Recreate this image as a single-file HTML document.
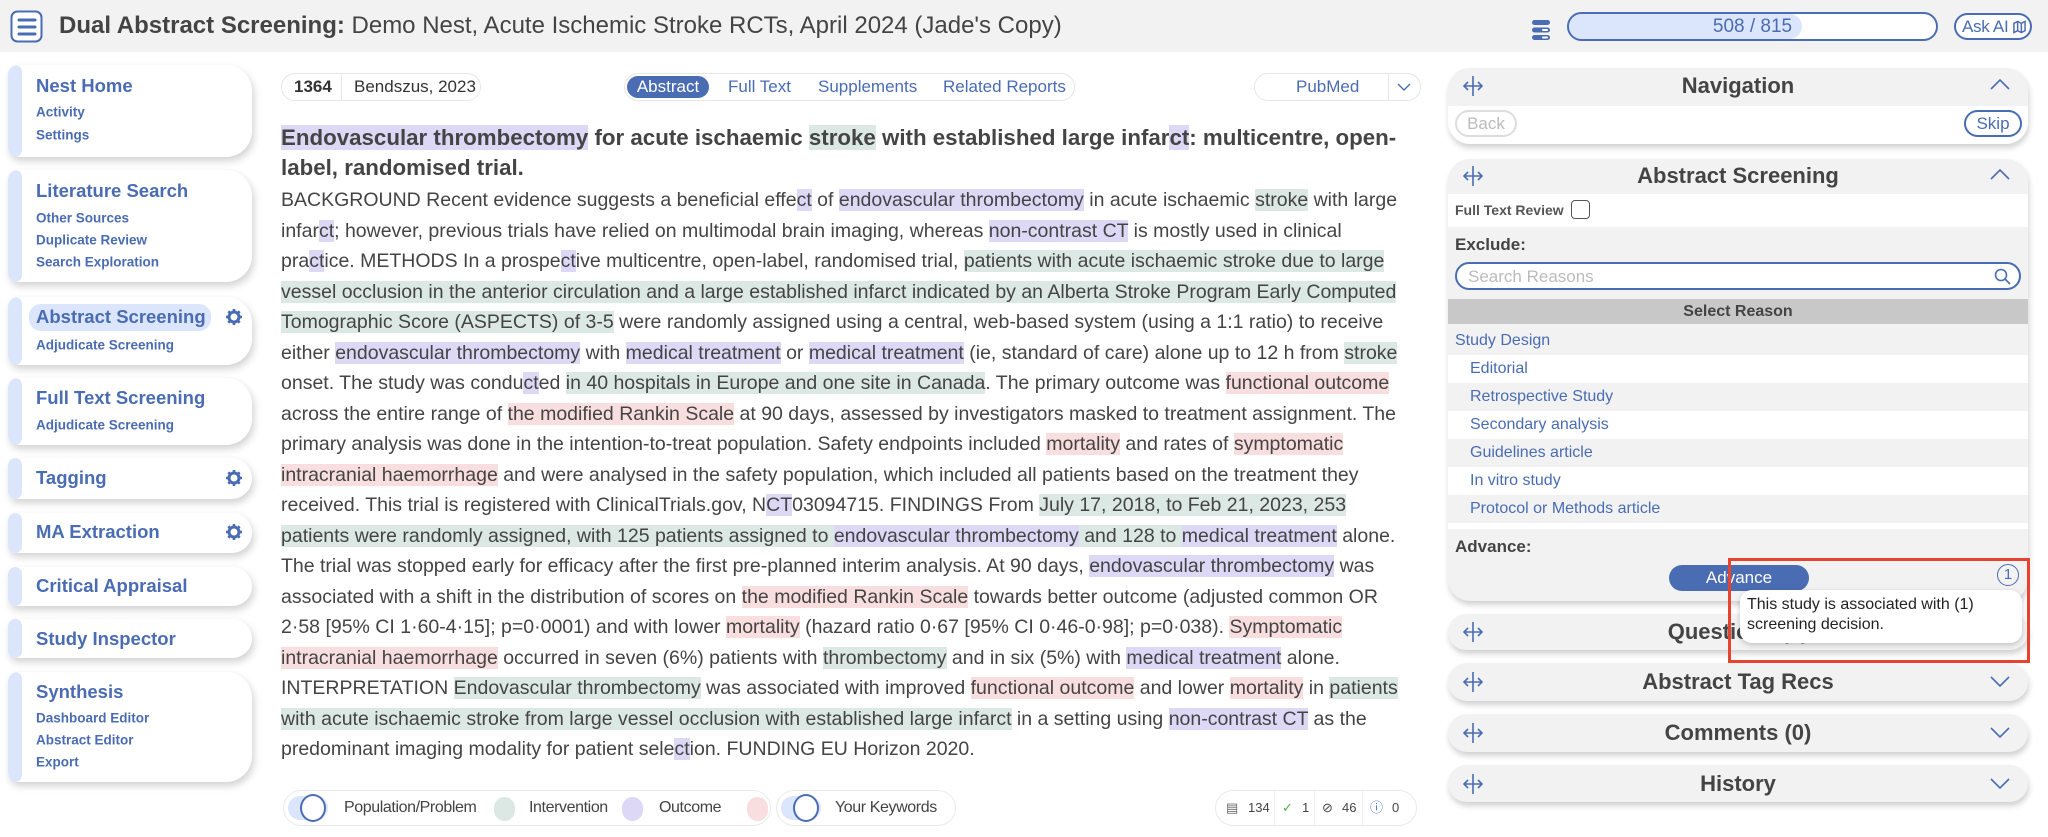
<!DOCTYPE html>
<html><head><meta charset="utf-8"><style>
*{box-sizing:border-box;margin:0;padding:0}
body{width:2048px;height:837px;overflow:hidden;background:#fff;font-family:"Liberation Sans",Arial,sans-serif;color:#444;position:relative}
.a{position:absolute}
.hdr{left:0;top:0;width:2048px;height:52px;background:#f2f2f2}
.card{position:absolute;left:8px;width:244px;background:#fff;border-radius:10px 26px 26px 10px;box-shadow:2px 4px 8px rgba(0,0,0,.18);overflow:hidden}
.card .strip{position:absolute;left:0;top:0;bottom:0;width:14px;background:#dbe5fb;border-radius:10px}
.nt{position:absolute;left:28px;font-weight:bold;font-size:18.5px;color:#4a6cb3;white-space:nowrap;transform:translateY(-50%)}
.ns{position:absolute;left:28px;font-weight:bold;font-size:13.5px;color:#4a6cb3;white-space:nowrap;transform:translateY(-50%)}
.gear{position:absolute;left:218px;width:16px;height:16px;transform:translateY(-50%)}
.ln{position:absolute;left:281px;font-size:19.5px;white-space:nowrap;color:#444;line-height:26px;transform:translateY(-50%)}
.g{background:#dce8e4}.p{background:#dcd8f6}.r{background:#f8dede}
.tl{position:absolute;left:281px;font-size:22.3px;font-weight:bold;white-space:nowrap;color:#444;line-height:28px;transform:translateY(-50%)}
.pc{position:absolute;left:1448px;width:580px;background:#f2f2f2;border-radius:22px;box-shadow:1px 4px 6px rgba(0,0,0,.18);overflow:hidden}
.ph{position:absolute;left:0;width:580px;text-align:center;font-weight:bold;font-size:22px;color:#444;transform:translateY(-50%)}
.mv{position:absolute;left:14px;width:22px;height:22px;transform:translateY(-50%)}
.chev{position:absolute;right:18px;width:20px;height:12px;transform:translateY(-50%)}
.row{position:absolute;left:0;width:580px;height:28px;line-height:28px;font-size:16px;color:#4a6cb3;padding-left:22px}
</style></head><body>
<div class="a hdr"></div>
<svg class="a" style="left:10px;top:10px" width="34" height="34" viewBox="0 0 34 34"><rect x="1.5" y="1.5" width="30" height="30" rx="6" fill="#fff" stroke="#4a6cb3" stroke-width="2"/><path d="M9 10h16M9 17h16M9 24h16" stroke="#4a6cb3" stroke-width="3" stroke-linecap="round"/></svg>
<div class="a" style="left:59px;top:12px;font-size:24px;color:#444;white-space:nowrap"><b>Dual Abstract Screening:</b> Demo Nest, Acute Ischemic Stroke RCTs, April 2024 (Jade's Copy)</div>
<svg class="a" style="left:1531px;top:18px" width="20" height="24" viewBox="0 0 20 24"><rect x="1" y="2" width="18" height="5" rx="2.5" fill="#4a6cb3"/><rect x="1" y="9.5" width="18" height="5" rx="2.5" fill="#4a6cb3"/><rect x="1" y="17" width="18" height="5" rx="2.5" fill="#4a6cb3"/><rect x="11" y="11" width="6" height="2" rx="1" fill="#fff"/><rect x="11" y="18.5" width="6" height="2" rx="1" fill="#fff"/></svg>
<div class="a" style="left:1567px;top:12px;width:371px;height:29px;border:2px solid #4a6cb3;border-radius:15px;background:#fff;overflow:hidden"><div style="width:233px;height:100%;background:#dbe5fb;border-radius:15px"></div><div class="a" style="left:0;top:0;width:100%;text-align:center;line-height:25px;font-size:19px;color:#4a6cb3">508 / 815</div></div>
<div class="a" style="left:1954px;top:13px;width:78px;height:27px;border:2px solid #4a6cb3;border-radius:14px;background:#fff;font-size:17px;color:#4a6cb3;line-height:23px;padding-left:6px;white-space:nowrap;letter-spacing:-0.3px">Ask AI<svg style="position:absolute;left:57px;top:5px" width="13" height="14" viewBox="0 0 14 14"><path d="M1 3l4-2 4 2 4-2v10l-4 2-4-2-4 2z M5 1v10 M9 3v10" fill="none" stroke="#4a6cb3" stroke-width="1.6"/></svg></div>

<!-- sidebar -->
<div class="card" style="top:65px;height:92px"><div class="strip"></div><div class="nt" style="top:21px">Nest Home</div><div class="ns" style="top:47px">Activity</div><div class="ns" style="top:70px">Settings</div></div>
<div class="card" style="top:170px;height:112px"><div class="strip"></div><div class="nt" style="top:21px">Literature Search</div><div class="ns" style="top:48px">Other Sources</div><div class="ns" style="top:70px">Duplicate Review</div><div class="ns" style="top:92px">Search Exploration</div></div>
<div class="card" style="top:297px;height:68px"><div class="strip"></div><div class="a" style="left:21px;top:7px;width:182px;height:27px;background:#dbe5fb;border-radius:12px"></div><div class="nt" style="top:20px">Abstract Screening</div><div class="ns" style="top:48px">Adjudicate Screening</div><svg class="gear" style="top:20px" viewBox="0 0 16 16"><circle cx="8" cy="8" r="5" fill="none" stroke="#4a6cb3" stroke-width="3"/><path d="M8 0v4M8 12v4M0 8h4M12 8h4M2.3 2.3l2.8 2.8M10.9 10.9l2.8 2.8M2.3 13.7l2.8-2.8M10.9 5.1l2.8-2.8" stroke="#4a6cb3" stroke-width="2.6"/></svg></div>
<div class="card" style="top:378px;height:67px"><div class="strip"></div><div class="nt" style="top:20px">Full Text Screening</div><div class="ns" style="top:47px">Adjudicate Screening</div></div>
<div class="card" style="top:458px;height:41px"><div class="strip"></div><div class="nt" style="top:20px">Tagging</div><svg class="gear" style="top:20px" viewBox="0 0 16 16"><circle cx="8" cy="8" r="5" fill="none" stroke="#4a6cb3" stroke-width="3"/><path d="M8 0v4M8 12v4M0 8h4M12 8h4M2.3 2.3l2.8 2.8M10.9 10.9l2.8 2.8M2.3 13.7l2.8-2.8M10.9 5.1l2.8-2.8" stroke="#4a6cb3" stroke-width="2.6"/></svg></div>
<div class="card" style="top:513px;height:40px"><div class="strip"></div><div class="nt" style="top:19px">MA Extraction</div><svg class="gear" style="top:19px" viewBox="0 0 16 16"><circle cx="8" cy="8" r="5" fill="none" stroke="#4a6cb3" stroke-width="3"/><path d="M8 0v4M8 12v4M0 8h4M12 8h4M2.3 2.3l2.8 2.8M10.9 10.9l2.8 2.8M2.3 13.7l2.8-2.8M10.9 5.1l2.8-2.8" stroke="#4a6cb3" stroke-width="2.6"/></svg></div>
<div class="card" style="top:567px;height:39px"><div class="strip"></div><div class="nt" style="top:19px">Critical Appraisal</div></div>
<div class="card" style="top:619px;height:39px"><div class="strip"></div><div class="nt" style="top:20px">Study Inspector</div></div>
<div class="card" style="top:672px;height:110px"><div class="strip"></div><div class="nt" style="top:20px">Synthesis</div><div class="ns" style="top:46px">Dashboard Editor</div><div class="ns" style="top:68px">Abstract Editor</div><div class="ns" style="top:90px">Export</div></div>

<!-- main top -->
<div class="a" style="left:281px;top:73px;width:200px;height:28px;border:1px solid #e6e6e6;border-radius:14px;font-size:17px;line-height:26px;color:#333"><b style="position:absolute;left:12px">1364</b><div class="a" style="left:59px;top:0;width:1px;height:26px;background:#e6e6e6"></div><span style="position:absolute;left:72px">Bendszus, 2023</span></div>
<div class="a" style="left:624px;top:73px;width:451px;height:28px;border:1px solid #e6e6e6;border-radius:14px;font-size:17px;line-height:26px;color:#4a6cb3"><div class="a" style="left:2px;top:2px;width:82px;height:22px;background:#4a6cb3;border-radius:11px;color:#fff;text-align:center;line-height:22px">Abstract</div><span class="a" style="left:103px">Full Text</span><span class="a" style="left:193px">Supplements</span><span class="a" style="left:318px">Related Reports</span></div>
<div class="a" style="left:1254px;top:73px;width:167px;height:28px;border:1px solid #e6e6e6;border-radius:14px;font-size:17px;line-height:26px;color:#4a6cb3"><span class="a" style="left:41px">PubMed</span><div class="a" style="left:133px;top:0;width:1px;height:26px;background:#e6e6e6"></div><svg class="a" style="left:142px;top:9px" width="14" height="9" viewBox="0 0 14 9"><path d="M1 1l6 6 6-6" fill="none" stroke="#4a6cb3" stroke-width="1.4"/></svg></div>

<div class="tl" style="top:138px"><span class="p">Endovascular thrombectomy</span> for acute ischaemic <span class="g">stroke</span> with established large infar<span class="p">ct</span>: multicentre, open-</div>
<div class="tl" style="top:168px">label, randomised trial.</div>

<div class="ln" style="top:200px">BACKGROUND Recent evidence suggests a beneficial effe<span class="p">ct</span> of <span class="p">endovascular thrombectomy</span> in acute ischaemic <span class="g">stroke</span> with large</div>
<div class="ln" style="top:230.5px">infar<span class="p">ct</span>; however, previous trials have relied on multimodal brain imaging, whereas <span class="p">non-contrast CT</span> is mostly used in clinical</div>
<div class="ln" style="top:261px">pra<span class="p">ct</span>ice. METHODS In a prospe<span class="p">ct</span>ive multicentre, open-label, randomised trial, <span class="g">patients with acute ischaemic stroke due to large</span></div>
<div class="ln" style="top:291.5px"><span class="g">vessel occlusion in the anterior circulation and a large established infarct indicated by an Alberta Stroke Program Early Computed</span></div>
<div class="ln" style="top:322px"><span class="g">Tomographic Score (ASPECTS) of 3-5</span> were randomly assigned using a central, web-based system (using a 1:1 ratio) to receive</div>
<div class="ln" style="top:352.5px">either <span class="p">endovascular thrombectomy</span> with <span class="p">medical treatment</span> or <span class="p">medical treatment</span> (ie, standard of care) alone up to 12 h from <span class="g">stroke</span></div>
<div class="ln" style="top:383px">onset. The study was condu<span class="p">ct</span>ed <span class="g">in 40 hospitals in Europe and one site in Canada</span>. The primary outcome was <span class="r">functional outcome</span></div>
<div class="ln" style="top:413.5px">across the entire range of <span class="r">the modified Rankin Scale</span> at 90 days, assessed by investigators masked to treatment assignment. The</div>
<div class="ln" style="top:444px">primary analysis was done in the intention-to-treat population. Safety endpoints included <span class="r">mortality</span> and rates of <span class="r">symptomatic</span></div>
<div class="ln" style="top:474.5px"><span class="r">intracranial haemorrhage</span> and were analysed in the safety population, which included all patients based on the treatment they</div>
<div class="ln" style="top:505px">received. This trial is registered with ClinicalTrials.gov, N<span class="p">CT</span>03094715. FINDINGS From <span class="g">July 17, 2018, to Feb 21, 2023, 253</span></div>
<div class="ln" style="top:535.5px"><span class="g">patients were randomly assigned, with 125 patients assigned to </span><span class="p">endovascular thrombectomy</span><span class="g"> and 128 to </span><span class="p">medical treatment</span> alone.</div>
<div class="ln" style="top:566px">The trial was stopped early for efficacy after the first pre-planned interim analysis. At 90 days, <span class="p">endovascular thrombectomy</span> was</div>
<div class="ln" style="top:596.5px">associated with a shift in the distribution of scores on <span class="r">the modified Rankin Scale</span> towards better outcome (adjusted common OR</div>
<div class="ln" style="top:627px">2·58 [95% CI 1·60-4·15]; p=0·0001) and with lower <span class="r">mortality</span> (hazard ratio 0·67 [95% CI 0·46-0·98]; p=0·038). <span class="r">Symptomatic</span></div>
<div class="ln" style="top:657.5px"><span class="r">intracranial haemorrhage</span> occurred in seven (6%) patients with <span class="g">thrombectomy</span> and in six (5%) with <span class="p">medical treatment</span> alone.</div>
<div class="ln" style="top:688px">INTERPRETATION <span class="g">Endovascular thrombectomy</span> was associated with improved <span class="r">functional outcome</span> and lower <span class="r">mortality</span> in <span class="g">patients</span></div>
<div class="ln" style="top:718.5px"><span class="g">with acute ischaemic stroke from large vessel occlusion with established large infarct</span> in a setting using <span class="p">non-contrast CT</span> as the</div>
<div class="ln" style="top:749px">predominant imaging modality for patient sele<span class="p">ct</span>ion. FUNDING EU Horizon 2020.</div>

<!-- legend -->
<div class="a" style="left:283px;top:790px;width:488px;height:36px;border:1px solid #eaeaea;border-radius:18px;font-size:16px;color:#444;line-height:34px;white-space:nowrap">
<div class="a" style="left:4px;top:5px;width:40px;height:24px;background:#dbe5fb;border-radius:12px"></div><div class="a" style="left:16px;top:3px;width:26px;height:28px;border:2px solid #4a6cb3;border-radius:50%;background:#fff"></div>
<span class="a" style="left:60px;letter-spacing:-0.4px">Population/Problem</span><div class="a" style="left:210px;top:6px;width:21px;height:24px;border-radius:11px;background:#dce8e4"></div>
<span class="a" style="left:245px;letter-spacing:-0.4px">Intervention</span><div class="a" style="left:338px;top:6px;width:21px;height:24px;border-radius:11px;background:#dcd8f6"></div>
<span class="a" style="left:375px;letter-spacing:-0.4px">Outcome</span><div class="a" style="left:463px;top:6px;width:21px;height:24px;border-radius:11px;background:#f8dede"></div></div>
<div class="a" style="left:776px;top:790px;width:180px;height:36px;border:1px solid #eaeaea;border-radius:18px;font-size:16px;color:#444;line-height:34px;white-space:nowrap">
<div class="a" style="left:4px;top:5px;width:40px;height:24px;background:#dbe5fb;border-radius:12px"></div><div class="a" style="left:16px;top:3px;width:26px;height:28px;border:2px solid #4a6cb3;border-radius:50%;background:#fff"></div>
<span class="a" style="left:58px;letter-spacing:-0.4px">Your Keywords</span></div>
<div class="a" style="left:1215px;top:790px;width:202px;height:36px;border:1px solid #eaeaea;border-radius:18px;font-size:13px;color:#444;line-height:34px">
<span class="a" style="left:10px;color:#666">&#9636;</span><span class="a" style="left:32px">134</span><div class="a" style="left:58px;top:0;width:1px;height:34px;background:#eee"></div>
<span class="a" style="left:66px;color:#4caf50">&#10003;</span><span class="a" style="left:86px">1</span><div class="a" style="left:98px;top:0;width:1px;height:34px;background:#eee"></div>
<span class="a" style="left:106px">&#8856;</span><span class="a" style="left:126px">46</span><div class="a" style="left:146px;top:0;width:1px;height:34px;background:#eee"></div>
<span class="a" style="left:154px;color:#3f6fe0">&#9432;</span><span class="a" style="left:176px">0</span></div>

<!-- right panel -->
<svg width="0" height="0" style="position:absolute"><defs><g id="mvi"><path d="M11 1v20M2 11h18M6 7l-4 4 4 4M16 7l4 4-4 4" fill="none" stroke="#4a6cb3" stroke-width="1.6"/></g><g id="up"><path d="M1 11l9-9 9 9" fill="none" stroke="#4a6cb3" stroke-width="1.6"/></g><g id="dn"><path d="M1 1l9 9 9-9" fill="none" stroke="#4a6cb3" stroke-width="1.6"/></g></defs></svg>

<div class="pc" style="top:68px;height:76px">
<div class="ph" style="top:18px">Navigation</div><svg class="mv" style="top:18px" viewBox="0 0 22 22"><use href="#mvi"/></svg><svg class="chev" style="top:16px" viewBox="0 0 20 12"><use href="#up"/></svg>
<div class="a" style="left:0;top:38px;width:580px;height:38px;background:#fff"></div>
<div class="a" style="left:7px;top:42px;width:62px;height:27px;border:2px solid #ddd;border-radius:14px;color:#bbb;font-size:17px;text-align:center;line-height:23px">Back</div>
<div class="a" style="left:516px;top:42px;width:58px;height:27px;border:2px solid #4a6cb3;border-radius:14px;color:#4a6cb3;font-size:17px;text-align:center;line-height:23px">Skip</div>
</div>

<div class="pc" style="top:159px;height:442px">
<div class="ph" style="top:17px">Abstract Screening</div><svg class="mv" style="top:17px" viewBox="0 0 22 22"><use href="#mvi"/></svg><svg class="chev" style="top:15px" viewBox="0 0 20 12"><use href="#up"/></svg>
<div class="a" style="left:0;top:35px;width:580px;height:33px;background:#fff"></div>
<div class="a" style="left:7px;top:43px;font-size:14px;font-weight:bold;color:#555">Full Text Review</div>
<div class="a" style="left:123px;top:41px;width:19px;height:19px;border:1.5px solid #555;border-radius:4px;background:#fff"></div>
<div class="a" style="left:7px;top:76px;font-size:17px;font-weight:bold;color:#444">Exclude:</div>
<div class="a" style="left:7px;top:103px;width:566px;height:28px;border:2px solid #4a6cb3;border-radius:14px;background:#fff"><span class="a" style="left:11px;top:3px;font-size:17px;color:#bbb">Search Reasons</span><svg class="a" style="right:8px;top:4px" width="17" height="17" viewBox="0 0 17 17"><circle cx="7" cy="7" r="5.5" fill="none" stroke="#4a6cb3" stroke-width="1.6"/><path d="M11 11l5 5" stroke="#4a6cb3" stroke-width="1.6"/></svg></div>
<div class="a" style="left:0;top:140px;width:580px;height:25px;background:#c8c8c8;text-align:center;font-size:16px;font-weight:bold;color:#444;line-height:25px">Select Reason</div>
<div class="row" style="top:168px;background:#f2f2f2;padding-left:7px">Study Design</div>
<div class="row" style="top:196px;background:#fff">Editorial</div>
<div class="row" style="top:224px;background:#f2f2f2">Retrospective Study</div>
<div class="row" style="top:252px;background:#fff">Secondary analysis</div>
<div class="row" style="top:280px;background:#f2f2f2">Guidelines article</div>
<div class="row" style="top:308px;background:#fff">In vitro study</div>
<div class="row" style="top:336px;background:#f2f2f2">Protocol or Methods article</div>
<div class="a" style="left:0;top:364px;width:580px;height:6px;background:#fff"></div>
<div class="a" style="left:7px;top:378px;font-size:17px;font-weight:bold;color:#444">Advance:</div>
<div class="a" style="left:221px;top:406px;width:140px;height:26px;background:#4a6cb3;border-radius:13px;color:#fff;font-size:17px;text-align:center;line-height:26px">Advance</div>
<div class="a" style="left:549px;top:405px;width:22px;height:22px;border:1.5px solid #4a6cb3;border-radius:50%;color:#4a6cb3;font-size:15px;text-align:center;line-height:19px">1</div>
</div>

<div class="pc" style="top:614px;height:36px"><div class="ph" style="top:18px">Questions (0)</div><svg class="mv" style="top:18px" viewBox="0 0 22 22"><use href="#mvi"/></svg><svg class="chev" style="top:18px" viewBox="0 0 20 12"><use href="#dn"/></svg></div>
<div class="pc" style="top:663px;height:38px"><div class="ph" style="top:19px">Abstract Tag Recs</div><svg class="mv" style="top:19px" viewBox="0 0 22 22"><use href="#mvi"/></svg><svg class="chev" style="top:19px" viewBox="0 0 20 12"><use href="#dn"/></svg></div>
<div class="pc" style="top:714px;height:38px"><div class="ph" style="top:19px">Comments (0)</div><svg class="mv" style="top:19px" viewBox="0 0 22 22"><use href="#mvi"/></svg><svg class="chev" style="top:19px" viewBox="0 0 20 12"><use href="#dn"/></svg></div>
<div class="pc" style="top:765px;height:37px"><div class="ph" style="top:19px">History</div><svg class="mv" style="top:19px" viewBox="0 0 22 22"><use href="#mvi"/></svg><svg class="chev" style="top:19px" viewBox="0 0 20 12"><use href="#dn"/></svg></div>

<div class="a" style="left:1740px;top:590px;width:282px;height:53px;background:#fff;border-radius:12px;box-shadow:0 2px 6px rgba(0,0,0,.2);font-size:16px;color:#222;padding:5px 0 0 7px;line-height:20px">This study is associated with (1)<br>screening decision.</div>
<div class="a" style="left:1728px;top:558px;width:302px;height:105px;border:3px solid #e8432e"></div>
</body></html>
